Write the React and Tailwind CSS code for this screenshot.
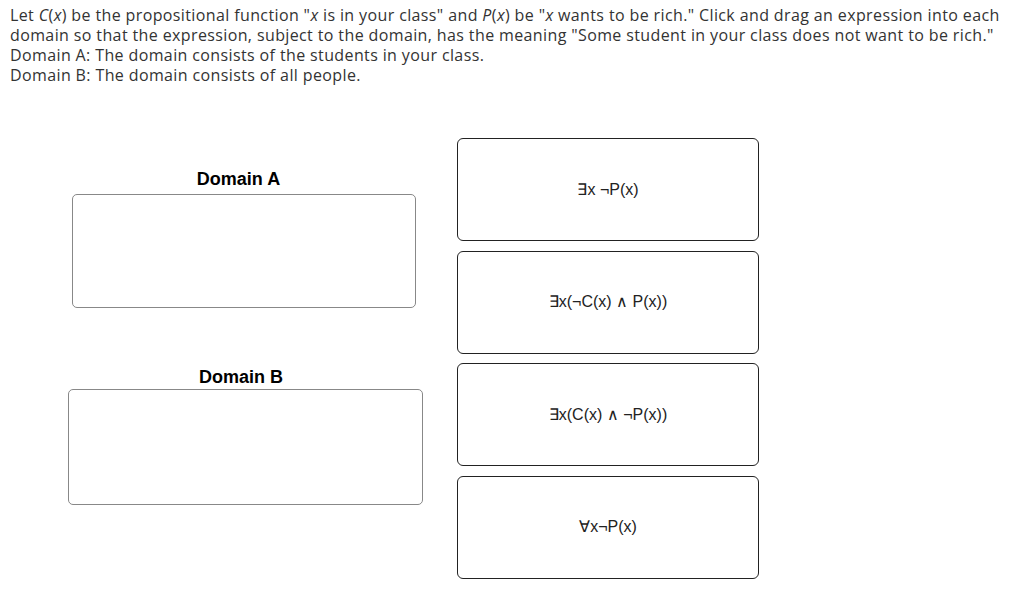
import React from "react";

const cards = ["∃x ¬P(x)", "∃x(¬C(x) ∧ P(x))", "∃x(C(x) ∧ ¬P(x))", "∀x¬P(x)"];

export default function App() {
  return (
    <div className="w-[1026px] h-[595px] bg-white overflow-hidden">
      <div
        className="pl-[10px] pr-[10px] pt-[5px] text-[16px] leading-[20px] text-[#333] tracking-[0.38px]"
        style={{ fontFamily: '"Open Sans", sans-serif' }}
      >
        <p>
          Let <i>C</i>(<i>x</i>) be the propositional function "<i>x</i> is in your class" and <i>P</i>(<i>x</i>) be "<i>x</i> wants to be rich." Click and drag an expression into each domain so that the expression, subject to the domain, has the meaning "Some student in your class does not want to be rich."
        </p>
        <p>Domain A: The domain consists of the students in your class.</p>
        <p>Domain B: The domain consists of all people.</p>
      </div>
      <div className="flex mt-[53px]" style={{ fontFamily: '"Liberation Sans", Arial, sans-serif' }}>
        <div className="ml-[68px] w-[355px] flex flex-col items-center pt-[31px]">
          <div className="text-[18px] font-bold text-black leading-[20px] mr-[14px]">Domain A</div>
          <div className="mt-[5px] self-start ml-[4px] w-[344px] h-[114px] border border-[#888] rounded-[5px]" />
          <div className="mt-[59px] text-[18px] font-bold text-black leading-[20px] mr-[9px]">Domain B</div>
          <div className="mt-[2px] w-[355px] h-[116px] border border-[#888] rounded-[5px]" />
        </div>
        <div className="ml-[34px] w-[302px] flex flex-col gap-[9.5px]">
          {cards.map((c) => (
            <div
              key={c}
              className="h-[103px] border border-[#222] rounded-[6px] flex items-center justify-center text-[16px] text-[#222]"
            >
              {c}
            </div>
          ))}
        </div>
      </div>
    </div>
  );
}
